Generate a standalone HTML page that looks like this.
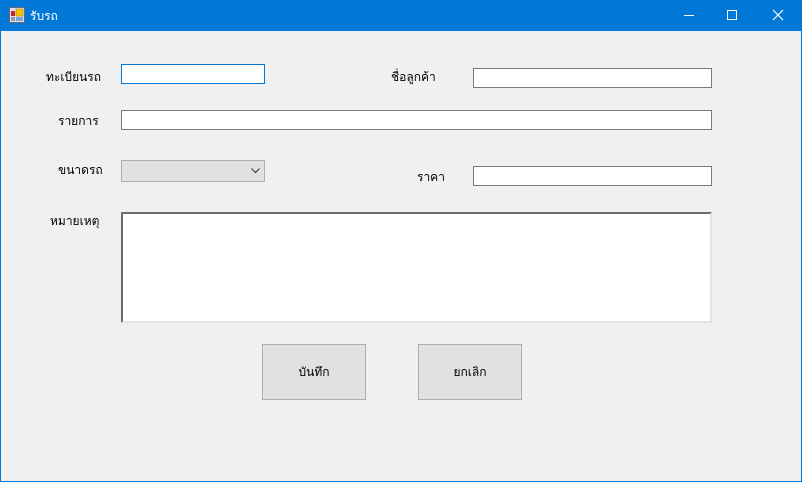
<!DOCTYPE html>
<html><head><meta charset="utf-8"><style>
*{margin:0;padding:0;box-sizing:border-box}
body{width:802px;height:482px;overflow:hidden;background:#f0f0f0;font-family:"Liberation Sans","Noto Sans CJK SC",sans-serif;font-size:12px;color:#000;position:relative}
.win{position:absolute;left:0;top:0;width:802px;height:482px;border:1px solid #0078d7;border-top:none}
.tb{position:absolute;left:0;top:0;width:802px;height:31px;background:#0078d7;color:#fff}
.a{position:absolute}
.lbl{position:absolute;font-size:12px;line-height:14px;white-space:nowrap}
.box{position:absolute;background:#fff;border:1px solid #7a7a7a}
.btn{position:absolute;background:#e1e1e1;border:1px solid #adadad;text-align:center;font-size:12px}
</style></head><body>
<div class="win"></div>
<div class="tb">
 <svg class="a" style="left:9px;top:7px" width="16" height="16" viewBox="0 0 16 16">
  <rect x="0.5" y="0.5" width="15" height="15" fill="#dde" stroke="#667"/>
  <rect x="2" y="4" width="4" height="5" fill="#c22"/>
  <rect x="7" y="2" width="7" height="7" fill="#f5c400" stroke="#a80" stroke-width=".6"/>
  <rect x="7" y="10" width="7" height="4" fill="#7aa6e0"/>
  <rect x="2" y="10" width="4" height="4" fill="#99a"/>
 </svg>
 <div class="lbl" style="left:30px;top:9px;color:#fff">รับรถ</div>
 <div class="a" style="left:684px;top:15px;width:10px;height:1px;background:#fff"></div>
 <div class="a" style="left:727px;top:10px;width:10px;height:10px;border:1px solid #fff"></div>
 <svg class="a" style="left:772px;top:9px" width="12" height="12"><path d="M1 1L11 11M11 1L1 11" stroke="#fff" stroke-width="1.2"/></svg>
</div>
<div class="lbl" style="left:46px;top:70px">ทะเบียนรถ</div>
<div class="box" style="left:121px;top:64px;width:144px;height:20px;border-color:#0078d7"></div>
<div class="lbl" style="left:391px;top:70px">ชื่อลูกค้า</div>
<div class="box" style="left:473px;top:68px;width:239px;height:20px"></div>
<div class="lbl" style="left:58px;top:114px">รายการ</div>
<div class="box" style="left:121px;top:110px;width:591px;height:20px"></div>
<div class="lbl" style="left:58px;top:163px">ขนาดรถ</div>
<div class="box" style="left:121px;top:160px;width:144px;height:22px;background:#e1e1e1;border-color:#adadad"></div>
<svg class="a" style="left:251px;top:168px" width="9" height="6"><path d="M0.5 0.5L4.5 4.5L8.5 0.5" stroke="#333" fill="none"/></svg>
<div class="lbl" style="left:417px;top:170px">ราคา</div>
<div class="box" style="left:473px;top:166px;width:239px;height:20px"></div>
<div class="lbl" style="left:50px;top:214px">หมายเหตุ</div>
<div class="box" style="left:121px;top:212px;width:591px;height:111px;border:2px solid;border-color:#6d6d6d #e3e3e3 #e3e3e3 #6d6d6d"></div>
<div class="btn" style="left:262px;top:344px;width:104px;height:56px;line-height:54px">บันทึก</div>
<div class="btn" style="left:418px;top:344px;width:104px;height:56px;line-height:54px">ยกเลิก</div>
</body></html>
